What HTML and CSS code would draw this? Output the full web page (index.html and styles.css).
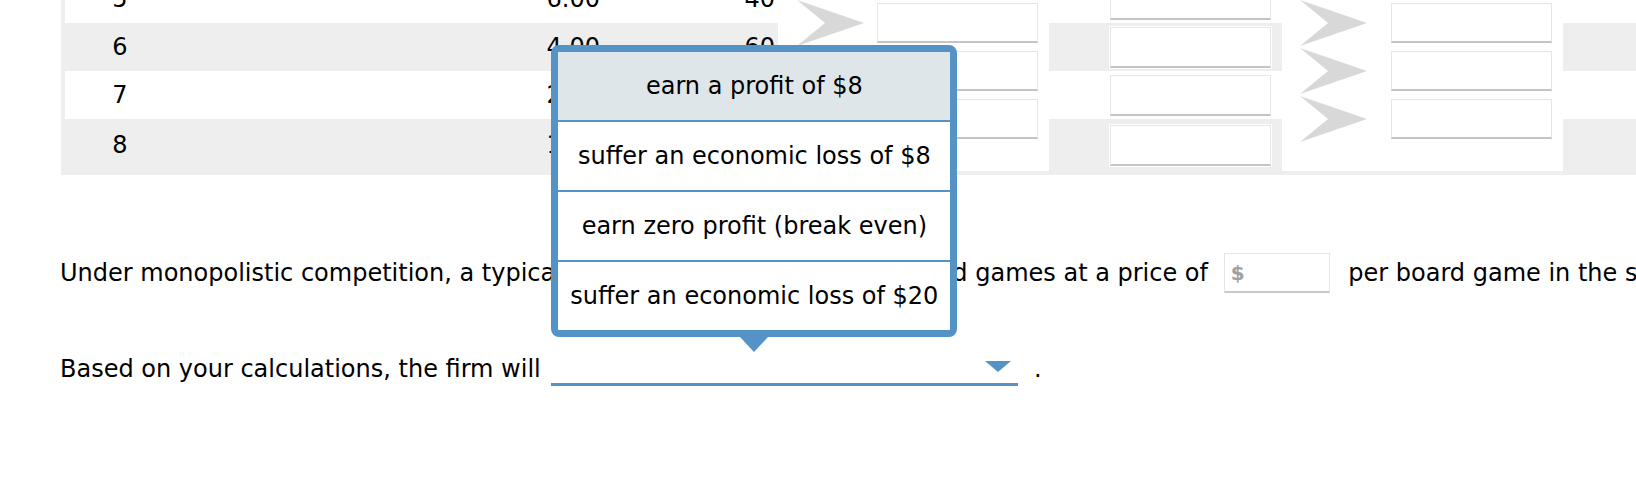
FILE: index.html
```html
<!DOCTYPE html>
<html>
<head>
<meta charset="utf-8">
<link rel="stylesheet" href="styles.css">
</head>
<body>
<div class="page">
  <div class="sheet">
    <div class="grid">
      <div class="span a">
        <div class="slot"><svg class="arrow" viewBox="0 0 67 46"><polygon points="0,0 67,23 0,46 28,23"/></svg><span class="box"></span></div>
        <div class="slot"><svg class="arrow" viewBox="0 0 67 46"><polygon points="0,0 67,23 0,46 28,23"/></svg><span class="box"></span></div>
        <div class="slot"><svg class="arrow" viewBox="0 0 67 46"><polygon points="0,0 67,23 0,46 28,23"/></svg><span class="box"></span></div>
      </div>
      <div class="span cc">
        <div class="slot"><svg class="arrow" viewBox="0 0 67 46"><polygon points="0,0 67,23 0,46 28,23"/></svg><span class="box"></span></div>
        <div class="slot"><svg class="arrow" viewBox="0 0 67 46"><polygon points="0,0 67,23 0,46 28,23"/></svg><span class="box"></span></div>
        <div class="slot"><svg class="arrow" viewBox="0 0 67 46"><polygon points="0,0 67,23 0,46 28,23"/></svg><span class="box"></span></div>
      </div>

      <div class="c q w">5</div><div class="c p w">6.00</div><div class="c t w">40</div>
      <div class="c b w"><span class="box"></span></div><div class="c d w"></div>

      <div class="c q">6</div><div class="c p">4.00</div><div class="c t">60</div>
      <div class="c b"><span class="box"></span></div><div class="c d"></div>

      <div class="c q w">7</div><div class="c p w">2.00</div><div class="c t w">80</div>
      <div class="c b w"><span class="box"></span></div><div class="c d w"></div>

      <div class="c q">8</div><div class="c p">1.00</div><div class="c t">90</div>
      <div class="c b"><span class="box"></span></div><div class="c d"></div>
    </div>

    <p class="line">Under monopolistic competition, a typical firm will produce <span class="blank qty"></span> board games at a price of <span class="blank price"><span class="cur">$</span></span> per board game in the short run.</p>

    <p class="line line2">Based on your calculations, the firm will <span class="select"><span class="caret"></span><span class="menu"><span class="opt sel">earn a profit of $8</span><span class="opt">suffer an economic loss of $8</span><span class="opt">earn zero profit (break even)</span><span class="opt">suffer an economic loss of $20</span></span></span> .</p>
  </div>
</div>
</body>
</html>
```

FILE: styles.css
```css
* { box-sizing: border-box; }

body {
  margin: 0;
  background: #fff;
  color: #000;
  font-family: "DejaVu Sans", Verdana, sans-serif;
  font-size: 24px;
}

.page {
  width: 1636px;
  height: 478px;
  overflow: hidden;
}

.sheet {
  width: 2100px;
  padding-left: 60px;
  margin-top: -25px;
}

.grid {
  display: grid;
  grid-template-columns: 110px 435px 168px 271px 233px 281px 300px;
  grid-template-rows: 48px 48px 48px 52px;
  width: max-content;
  margin-left: 1px;
  padding: 0 0 4px 4px;
  background: #eee;
}

.c { display: flex; align-items: center; }
.w { background: #fff; }
.q { grid-column: 1; justify-content: center; }
.p { grid-column: 2; justify-content: flex-end; padding-right: 10px; }
.t { grid-column: 3; justify-content: flex-end; padding-right: 3px; }
.b { grid-column: 5; justify-content: flex-end; padding-right: 11px; }
.d { grid-column: 7; }

.span {
  grid-row: 1 / span 4;
  display: flex;
  flex-direction: column;
  padding-top: 24px;
  background: #fff;
}
.a { grid-column: 4; padding-left: 19px; }
.cc { grid-column: 6; padding-left: 18px; }

.slot { height: 48px; display: flex; align-items: center; }
.a .slot { gap: 13px; }
.cc .slot { gap: 24px; }

.arrow {
  flex: none;
  width: 67px;
  height: 46px;
  fill: #d8d8d8;
  filter: blur(0.6px);
}

.box {
  flex: none;
  display: block;
  width: 161px;
  height: 40px;
  background: #fff;
  border: 1px solid #e6e6e6;
  border-bottom: 2px solid #c4c4c4;
  box-shadow: 0 0 0 1px #fff;
}
.b .box { height: 41px; }

.line {
  margin: 78px 0 0;
  line-height: 40px;
  white-space: nowrap;
}
.line2 { margin-top: 56px; }

.blank {
  display: inline-flex;
  align-items: center;
  vertical-align: top;
  width: 105px;
  height: 40px;
  margin: 0 8px 0 10px;
  padding-left: 6px;
  background: #fff;
  border: 1px solid #e6e6e6;
  border-bottom: 2px solid #c8c8c8;
}
.blank.qty { width: 95px; }
.blank.price { margin-left: 8px; margin-right: 11px; width: 106px; }
.cur {
  font-size: 20px;
  font-weight: bold;
  color: #a0a0a0;
}

.select {
  position: relative;
  display: inline-flex;
  align-items: center;
  justify-content: flex-end;
  vertical-align: top;
  width: 467px;
  height: 37px;
  margin-left: 3px;
  margin-right: 8px;
  padding-right: 7px;
  border-bottom: 3px solid #5593c6;
}
.caret {
  width: 0;
  height: 0;
  border-left: 13px solid transparent;
  border-right: 13px solid transparent;
  border-top: 11px solid #5593c6;
}

.menu {
  position: absolute;
  left: 0;
  bottom: 46px;
  z-index: 5;
  display: flex;
  flex-direction: column;
  width: 406px;
  background: #fff;
  border: 7px solid #5593c6;
  border-radius: 8px;
}
.menu::after {
  content: "";
  position: absolute;
  left: 50%;
  top: calc(100% + 7px);
  margin-left: -14px;
  border-left: 14px solid transparent;
  border-right: 14px solid transparent;
  border-top: 15px solid #5593c6;
}
.opt {
  display: block;
  height: 68px;
  line-height: 68px;
  text-align: center;
}
.opt + .opt {
  height: 70px;
  border-top: 2px solid #5593c6;
}
.opt.sel { background: #dee6e9; }
```
